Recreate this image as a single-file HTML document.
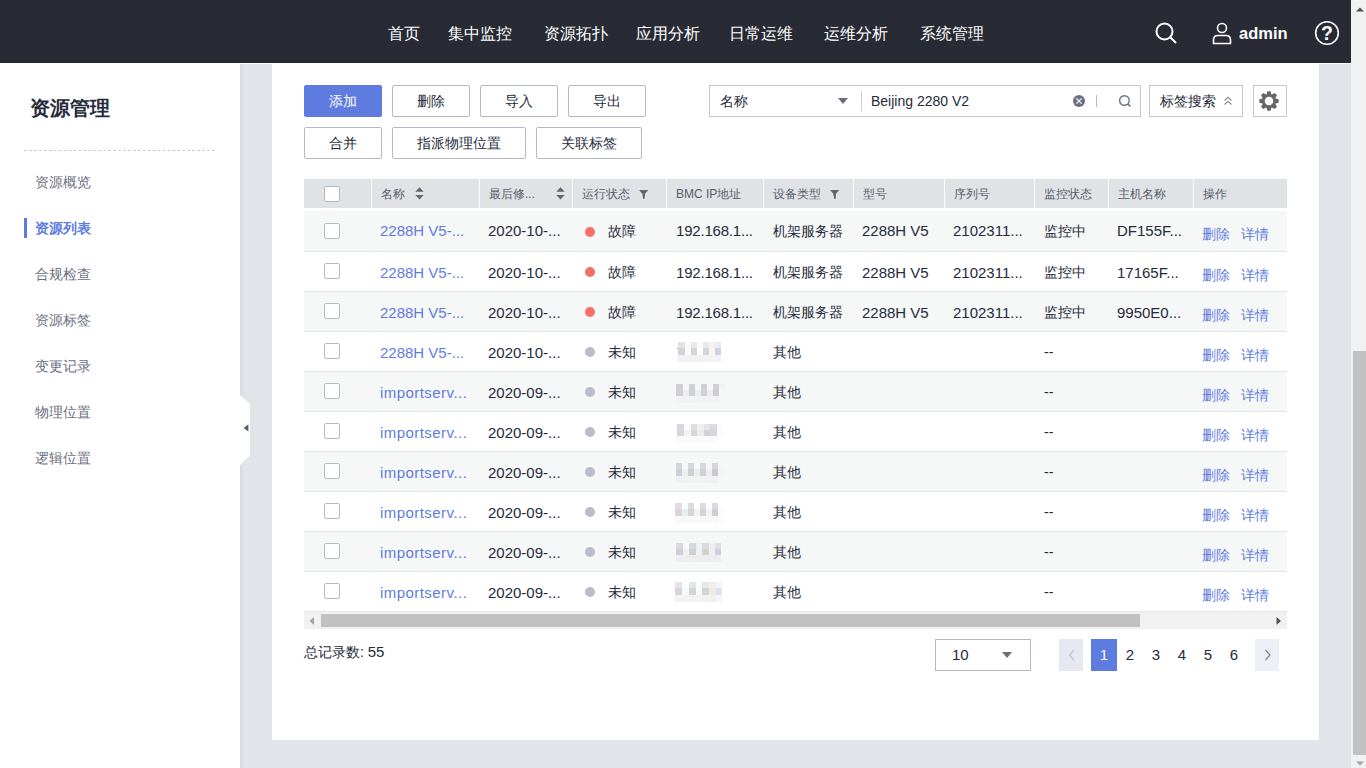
<!DOCTYPE html>
<html><head><meta charset="utf-8">
<style>
*{margin:0;padding:0;box-sizing:border-box}
html,body{width:1366px;height:768px;overflow:hidden;background:#e1e4e9;font-family:"Liberation Sans",sans-serif;color:#252b3a}
.abs{position:absolute}
.t{position:absolute;white-space:nowrap}
#hdr{position:absolute;left:0;top:0;width:1351px;height:63px;background:#282b33}
.nav{position:absolute;top:23px;color:#fff;font-size:16px;line-height:22px;white-space:nowrap;font-weight:500}
#vscroll{position:absolute;left:1351px;top:0;width:15px;height:768px;background:#f1f1f1}
#side{position:absolute;left:0;top:63px;width:240px;height:705px;background:#fff}
#main{position:absolute;left:272px;top:63px;width:1047px;height:677px;background:#fff}
.menu{position:absolute;left:35px;font-size:14px;line-height:20px;color:#6b707f;white-space:nowrap}
.btn{position:absolute;height:32px;border:1px solid #b3b8ca;border-radius:2px;background:#fff;font-size:14px;line-height:30px;text-align:center;color:#252b3a;white-space:nowrap}
.btn.pri{background:#5e7ce0;border-color:#5e7ce0;color:#fff}
.row{position:absolute;left:304px;width:983px;border-bottom:1px solid #e4e5e7}
.cb{position:absolute;width:16px;height:16px;border:1px solid #b3b8ca;border-radius:2px;background:#fff}
.cell{position:absolute;top:0;font-size:14px;white-space:nowrap;color:#252b3a}
.lnk{color:#5e7ce0}
.lat{font-size:15px}
.dot{position:absolute;width:10px;height:10px;border-radius:50%}
.th{position:absolute;top:179px;height:29px;background:#e0e3e6}
.tht{position:absolute;top:0;line-height:29px;font-size:12px;color:#575d6c;white-space:nowrap}
.pg{position:absolute;top:639px;height:32px;line-height:32px;font-size:15px;text-align:center;color:#252b3a}
</style></head><body>
<div id="hdr">
<div class="nav" style="left:388px">首页</div>
<div class="nav" style="left:448px">集中监控</div>
<div class="nav" style="left:544px">资源拓扑</div>
<div class="nav" style="left:636px">应用分析</div>
<div class="nav" style="left:729px">日常运维</div>
<div class="nav" style="left:824px">运维分析</div>
<div class="nav" style="left:920px">系统管理</div>
<svg class="abs" style="left:1154px;top:21px" width="26" height="26" viewBox="0 0 26 26"><circle cx="10.5" cy="10.5" r="8" fill="none" stroke="#fff" stroke-width="2"/><line x1="16.5" y1="16.5" x2="22" y2="22" stroke="#fff" stroke-width="2"/></svg>
<svg class="abs" style="left:1211px;top:21px" width="22" height="24" viewBox="0 0 22 24"><circle cx="11" cy="7" r="4.5" fill="none" stroke="#fff" stroke-width="1.6"/><path d="M2.5 22.5 V19 Q2.5 14.5 7 14.5 H15 Q19.5 14.5 19.5 19 V22.5 Z" fill="none" stroke="#fff" stroke-width="1.6" stroke-linejoin="round"/></svg>
<div class="t" style="left:1239px;top:22px;font-size:16.5px;line-height:22px;font-weight:bold;color:#fff">admin</div>
<svg class="abs" style="left:1313px;top:19px" width="28" height="28" viewBox="0 0 28 28"><circle cx="14" cy="14" r="11.3" fill="none" stroke="#fff" stroke-width="1.6"/><text x="14" y="21" text-anchor="middle" font-family="Liberation Sans" font-weight="bold" font-size="19.5" fill="#fff">?</text></svg>
</div>
<div id="vscroll"><div class="abs" style="left:2px;top:351px;width:13px;height:404px;background:#c1c1c1"></div>
<svg class="abs" style="left:4.5px;top:6.5px" width="8" height="5"><path d="M0 4.5 L4 0.5 L8 4.5 Z" fill="#505050"/></svg>
<svg class="abs" style="left:4.5px;top:760.5px" width="8" height="5"><path d="M0 0.5 L4 4.5 L8 0.5 Z" fill="#a3a3a3"/></svg>
</div>
<div id="side">
<div class="t" style="left:30px;top:33px;font-size:20px;line-height:24px;font-weight:bold;color:#252b3a">资源管理</div>
<div class="abs" style="left:24px;top:87px;width:191px;border-top:1px dashed #c9ccd6"></div>
<div class="menu" style="top:109px">资源概览</div>
<div class="abs" style="left:24px;top:155px;width:3px;height:20px;background:#5e7ce0"></div>
<div class="menu" style="top:155px;color:#5e7ce0;font-weight:bold">资源列表</div>
<div class="menu" style="top:201px">合规检查</div>
<div class="menu" style="top:247px">资源标签</div>
<div class="menu" style="top:293px">变更记录</div>
<div class="menu" style="top:339px">物理位置</div>
<div class="menu" style="top:385px">逻辑位置</div>
</div>
<div id="main"></div>
<div class="abs" style="left:0;top:63px;width:1351px;height:1px;background:#fff"></div>
<div class="abs" style="left:240px;top:64px;width:5px;height:704px;background:linear-gradient(90deg,rgba(0,0,0,0.045),rgba(0,0,0,0))"></div>
<svg class="abs" style="left:240px;top:395px" width="12" height="72" viewBox="0 0 12 72"><path d="M0 0 L10 9 V60.5 L0 70 Z" fill="#fff"/><path d="M3.6 33 L8.4 29.2 V36.6 Z" fill="#575d6c"/></svg>
<div class="btn pri" style="left:304px;top:85px;width:78px">添加</div>
<div class="btn" style="left:392px;top:85px;width:78px">删除</div>
<div class="btn" style="left:480px;top:85px;width:78px">导入</div>
<div class="btn" style="left:568px;top:85px;width:78px">导出</div>
<div class="btn" style="left:304px;top:127px;width:78px">合并</div>
<div class="btn" style="left:392px;top:127px;width:134px">指派物理位置</div>
<div class="btn" style="left:536px;top:127px;width:106px">关联标签</div>
<div class="abs" style="left:709px;top:85px;width:432px;height:32px;border:1px solid #c9c9c9;background:#fff"></div>
<div class="t" style="left:720px;top:85px;line-height:32px;font-size:14px">名称</div>
<svg class="abs" style="left:838px;top:98px" width="10" height="6"><path d="M0 0 H10 L5 6 Z" fill="#6b6f7a"/></svg>
<div class="abs" style="left:861px;top:91px;width:1px;height:20px;background:#c9ccd6"></div>
<div class="t" style="left:871px;top:85px;line-height:32px;font-size:14px;color:#252b3a">Beijing 2280 V2</div>
<svg class="abs" style="left:1073px;top:95px" width="12" height="12" viewBox="0 0 12 12"><circle cx="6" cy="6" r="6" fill="#6b7182"/><path d="M3.4 3.4 L8.6 8.6 M8.6 3.4 L3.4 8.6" stroke="#fff" stroke-width="1.2"/></svg>
<div class="abs" style="left:1096px;top:95px;width:1px;height:12px;background:#b6bacb"></div>
<svg class="abs" style="left:1118px;top:94px" width="14" height="14" viewBox="0 0 14 14"><circle cx="6.4" cy="6.5" r="4.8" fill="none" stroke="#6b7182" stroke-width="1.4"/><line x1="9.8" y1="9.9" x2="12.4" y2="12.5" stroke="#6b7182" stroke-width="1.5"/></svg>
<div class="abs" style="left:1149px;top:85px;width:94px;height:32px;border:1px solid #c9c9c9;background:#fff"></div>
<div class="t" style="left:1160px;top:85px;line-height:32px;font-size:14px">标签搜索</div>
<svg class="abs" style="left:1223px;top:96px" width="10" height="10" viewBox="0 0 10 10"><path d="M1.5 4.5 L5 1.2 L8.5 4.5 M1.5 8.5 L5 5.2 L8.5 8.5" fill="none" stroke="#8f8f8f" stroke-width="1.2"/></svg>
<div class="abs" style="left:1253px;top:85px;width:34px;height:32px;border:1px solid #c9c9c9;background:#fff"></div>
<svg class="abs" style="left:1259.2px;top:91.3px" width="20" height="20" viewBox="0 0 20 20"><path fill-rule="evenodd" fill="#666" d="M7.53,3.45 L8.34,0.34 L11.66,0.34 L12.47,3.45 L12.89,3.62 L15.66,2.00 L18.00,4.34 L16.38,7.11 L16.55,7.53 L19.66,8.34 L19.66,11.66 L16.55,12.47 L16.38,12.89 L18.00,15.66 L15.66,18.00 L12.89,16.38 L12.47,16.55 L11.66,19.66 L8.34,19.66 L7.53,16.55 L7.11,16.38 L4.34,18.00 L2.00,15.66 L3.62,12.89 L3.45,12.47 L0.34,11.66 L0.34,8.34 L3.45,7.53 L3.62,7.11 L2.00,4.34 L4.34,2.00 L7.11,3.62 Z M10 5.7 A4.3 4.3 0 1 0 10 14.3 A4.3 4.3 0 1 0 10 5.7 Z"/></svg>
<div class="th" style="left:304px;width:67px"></div>
<div class="th" style="left:372px;width:107px"></div>
<div class="th" style="left:480px;width:92px"></div>
<div class="th" style="left:573px;width:93px"></div>
<div class="th" style="left:667px;width:96px"></div>
<div class="th" style="left:764px;width:89px"></div>
<div class="th" style="left:854px;width:90px"></div>
<div class="th" style="left:945px;width:89px"></div>
<div class="th" style="left:1035px;width:73px"></div>
<div class="th" style="left:1109px;width:84px"></div>
<div class="th" style="left:1194px;width:93px"></div>
<div class="cb" style="left:324px;top:186px"></div>
<div class="tht" style="left:381px;top:180px">名称</div>
<div class="tht" style="left:489px;top:180px">最后修...</div>
<div class="tht" style="left:582px;top:180px">运行状态</div>
<div class="tht" style="left:676px;top:180px">BMC IP地址</div>
<div class="tht" style="left:773px;top:180px">设备类型</div>
<div class="tht" style="left:863px;top:180px">型号</div>
<div class="tht" style="left:954px;top:180px">序列号</div>
<div class="tht" style="left:1044px;top:180px">监控状态</div>
<div class="tht" style="left:1118px;top:180px">主机名称</div>
<div class="tht" style="left:1203px;top:180px">操作</div>
<svg class="abs" style="left:414.5px;top:187px" width="9" height="13" viewBox="0 0 9 13"><path d="M4.5 0.2 L8.7 4.8 H0.3 Z M0.3 8 H8.7 L4.5 12.5 Z" fill="#666"/></svg>
<svg class="abs" style="left:555.5px;top:187px" width="9" height="13" viewBox="0 0 9 13"><path d="M4.5 0.2 L8.7 4.8 H0.3 Z M0.3 8 H8.7 L4.5 12.5 Z" fill="#666"/></svg>
<svg class="abs" style="left:638.7px;top:190px" width="10" height="10" viewBox="0 0 10 10"><path d="M0 0 H9.3 L6.1 3.8 L5.7 8.4 Q4.9 9.5 4.1 8.4 L3.3 3.8 Z" fill="#666"/></svg>
<svg class="abs" style="left:829.7px;top:190px" width="10" height="10" viewBox="0 0 10 10"><path d="M0 0 H9.3 L6.1 3.8 L5.7 8.4 Q4.9 9.5 4.1 8.4 L3.3 3.8 Z" fill="#666"/></svg>
<div class="row" style="top:211px;height:41px;background:#f6f7f7">
<div class="cb" style="left:20px;top:12px"></div>
<div class="cell lnk lat" style="left:76px;line-height:40px;height:40px;top:0px">2288H V5-...</div>
<div class="cell lat" style="left:184px;line-height:40px;height:40px;top:0px">2020-10-...</div>
<div class="dot" style="left:281px;top:16px;background:#f66f6a"></div>
<div class="cell" style="left:304px;line-height:40px;height:40px;top:0px">故障</div>
<div class="cell lat" style="left:372px;line-height:40px;height:40px;top:0px;letter-spacing:-0.2px">192.168.1...</div>
<div class="cell" style="left:469px;line-height:40px;height:40px;top:0px">机架服务器</div>
<div class="cell lat" style="left:558px;line-height:40px;height:40px;top:0px">2288H V5</div>
<div class="cell lat" style="left:649px;line-height:40px;height:40px;top:0px">2102311...</div>
<div class="cell" style="left:740px;line-height:40px;height:40px;top:0px">监控中</div>
<div class="cell lat" style="left:813px;line-height:40px;height:40px;top:0px">DF155F...</div>
<div class="cell lnk" style="left:898px;line-height:40px;height:40px;top:0px;margin-top:3px">删除</div>
<div class="cell lnk" style="left:937px;line-height:40px;height:40px;top:0px;margin-top:3px">详情</div>
</div>
<div class="row" style="top:252px;height:40px;background:#fff">
<div class="cb" style="left:20px;top:11px"></div>
<div class="cell lnk lat" style="left:76px;line-height:39px;height:39px;top:1px">2288H V5-...</div>
<div class="cell lat" style="left:184px;line-height:39px;height:39px;top:1px">2020-10-...</div>
<div class="dot" style="left:281px;top:15px;background:#f66f6a"></div>
<div class="cell" style="left:304px;line-height:39px;height:39px;top:1px">故障</div>
<div class="cell lat" style="left:372px;line-height:39px;height:39px;top:1px;letter-spacing:-0.2px">192.168.1...</div>
<div class="cell" style="left:469px;line-height:39px;height:39px;top:1px">机架服务器</div>
<div class="cell lat" style="left:558px;line-height:39px;height:39px;top:1px">2288H V5</div>
<div class="cell lat" style="left:649px;line-height:39px;height:39px;top:1px">2102311...</div>
<div class="cell" style="left:740px;line-height:39px;height:39px;top:1px">监控中</div>
<div class="cell lat" style="left:813px;line-height:39px;height:39px;top:1px">17165F...</div>
<div class="cell lnk" style="left:898px;line-height:39px;height:39px;top:1px;margin-top:3px">删除</div>
<div class="cell lnk" style="left:937px;line-height:39px;height:39px;top:1px;margin-top:3px">详情</div>
</div>
<div class="row" style="top:292px;height:40px;background:#f6f7f7">
<div class="cb" style="left:20px;top:11px"></div>
<div class="cell lnk lat" style="left:76px;line-height:39px;height:39px;top:1px">2288H V5-...</div>
<div class="cell lat" style="left:184px;line-height:39px;height:39px;top:1px">2020-10-...</div>
<div class="dot" style="left:281px;top:15px;background:#f66f6a"></div>
<div class="cell" style="left:304px;line-height:39px;height:39px;top:1px">故障</div>
<div class="cell lat" style="left:372px;line-height:39px;height:39px;top:1px;letter-spacing:-0.2px">192.168.1...</div>
<div class="cell" style="left:469px;line-height:39px;height:39px;top:1px">机架服务器</div>
<div class="cell lat" style="left:558px;line-height:39px;height:39px;top:1px">2288H V5</div>
<div class="cell lat" style="left:649px;line-height:39px;height:39px;top:1px">2102311...</div>
<div class="cell" style="left:740px;line-height:39px;height:39px;top:1px">监控中</div>
<div class="cell lat" style="left:813px;line-height:39px;height:39px;top:1px">9950E0...</div>
<div class="cell lnk" style="left:898px;line-height:39px;height:39px;top:1px;margin-top:3px">删除</div>
<div class="cell lnk" style="left:937px;line-height:39px;height:39px;top:1px;margin-top:3px">详情</div>
</div>
<div class="row" style="top:332px;height:40px;background:#fff">
<div class="cb" style="left:20px;top:11px"></div>
<div class="cell lnk lat" style="left:76px;line-height:39px;height:39px;top:1px">2288H V5-...</div>
<div class="cell lat" style="left:184px;line-height:39px;height:39px;top:1px">2020-10-...</div>
<div class="dot" style="left:281px;top:15px;background:#b8bccb"></div>
<div class="cell" style="left:304px;line-height:39px;height:39px;top:1px">未知</div>
<div class="abs" style="left:374px;top:10px;width:7px;height:6px;background:#e2e3e8"></div>
<div class="abs" style="left:381px;top:10px;width:6px;height:6px;background:#fcfbfc"></div>
<div class="abs" style="left:387px;top:10px;width:6px;height:6px;background:#e6e9ea"></div>
<div class="abs" style="left:393px;top:10px;width:6px;height:6px;background:#fbfbf9"></div>
<div class="abs" style="left:399px;top:10px;width:6px;height:6px;background:#e8e9ee"></div>
<div class="abs" style="left:405px;top:10px;width:6px;height:6px;background:#f3f3ef"></div>
<div class="abs" style="left:411px;top:10px;width:6px;height:6px;background:#ebebf5"></div>
<div class="abs" style="left:374px;top:16px;width:7px;height:7px;background:#d3d2da"></div>
<div class="abs" style="left:381px;top:16px;width:6px;height:7px;background:#fcfcfc"></div>
<div class="abs" style="left:387px;top:16px;width:6px;height:7px;background:#d2d6d8"></div>
<div class="abs" style="left:393px;top:16px;width:6px;height:7px;background:#fcfcfa"></div>
<div class="abs" style="left:399px;top:16px;width:6px;height:7px;background:#d6d6d9"></div>
<div class="abs" style="left:405px;top:16px;width:6px;height:7px;background:#fcf4ea"></div>
<div class="abs" style="left:411px;top:16px;width:6px;height:7px;background:#cbd3e5"></div>
<div class="abs" style="left:374px;top:23px;width:7px;height:7px;background:#f2f2f5"></div>
<div class="abs" style="left:381px;top:23px;width:6px;height:7px;background:#f2f2f2"></div>
<div class="abs" style="left:387px;top:23px;width:6px;height:7px;background:#f2f2f2"></div>
<div class="abs" style="left:393px;top:23px;width:6px;height:7px;background:#f2f2f2"></div>
<div class="abs" style="left:399px;top:23px;width:6px;height:7px;background:#f2f2f2"></div>
<div class="abs" style="left:405px;top:23px;width:6px;height:7px;background:#f2f3f3"></div>
<div class="abs" style="left:411px;top:23px;width:6px;height:7px;background:#f2f2f7"></div>
<div class="cell" style="left:469px;line-height:39px;height:39px;top:1px">其他</div>
<div class="cell" style="left:740px;line-height:39px;height:39px;top:1px">--</div>
<div class="cell lnk" style="left:898px;line-height:39px;height:39px;top:1px;margin-top:3px">删除</div>
<div class="cell lnk" style="left:937px;line-height:39px;height:39px;top:1px;margin-top:3px">详情</div>
</div>
<div class="row" style="top:372px;height:40px;background:#f6f7f7">
<div class="cb" style="left:20px;top:11px"></div>
<div class="cell lnk lat" style="left:76px;line-height:39px;height:39px;top:1px;letter-spacing:0.45px">importserv...</div>
<div class="cell lat" style="left:184px;line-height:39px;height:39px;top:1px">2020-09-...</div>
<div class="dot" style="left:281px;top:15px;background:#b8bccb"></div>
<div class="cell" style="left:304px;line-height:39px;height:39px;top:1px">未知</div>
<div class="abs" style="left:372px;top:12px;width:7px;height:6px;background:#d0cfd6"></div>
<div class="abs" style="left:379px;top:12px;width:6px;height:6px;background:#f7f5f6"></div>
<div class="abs" style="left:385px;top:12px;width:6px;height:6px;background:#cdd2d5"></div>
<div class="abs" style="left:391px;top:12px;width:6px;height:6px;background:#f7f5f5"></div>
<div class="abs" style="left:397px;top:12px;width:6px;height:6px;background:#cfd0d4"></div>
<div class="abs" style="left:403px;top:12px;width:6px;height:6px;background:#f9f5f2"></div>
<div class="abs" style="left:409px;top:12px;width:6px;height:6px;background:#ced0d8"></div>
<div class="abs" style="left:415px;top:12px;width:6px;height:6px;background:#f7f3f3"></div>
<div class="abs" style="left:372px;top:18px;width:7px;height:6px;background:#d0cfd6"></div>
<div class="abs" style="left:379px;top:18px;width:6px;height:6px;background:#eceded"></div>
<div class="abs" style="left:385px;top:18px;width:6px;height:6px;background:#cdd2d5"></div>
<div class="abs" style="left:391px;top:18px;width:6px;height:6px;background:#ecedec"></div>
<div class="abs" style="left:397px;top:18px;width:6px;height:6px;background:#d0d1d1"></div>
<div class="abs" style="left:403px;top:18px;width:6px;height:6px;background:#ededec"></div>
<div class="abs" style="left:409px;top:18px;width:6px;height:6px;background:#ccced6"></div>
<div class="abs" style="left:415px;top:18px;width:6px;height:6px;background:#f6f7f7"></div>
<div class="abs" style="left:372px;top:24px;width:7px;height:7px;background:#f4f2f3"></div>
<div class="abs" style="left:379px;top:24px;width:6px;height:7px;background:#f3f3f3"></div>
<div class="abs" style="left:385px;top:24px;width:6px;height:7px;background:#f3f3f3"></div>
<div class="abs" style="left:391px;top:24px;width:6px;height:7px;background:#f3f3f3"></div>
<div class="abs" style="left:397px;top:24px;width:6px;height:7px;background:#f4f4f4"></div>
<div class="abs" style="left:403px;top:24px;width:6px;height:7px;background:#f3f3f3"></div>
<div class="abs" style="left:409px;top:24px;width:6px;height:7px;background:#f3f3f5"></div>
<div class="abs" style="left:415px;top:24px;width:6px;height:7px;background:#f6f6f6"></div>
<div class="cell" style="left:469px;line-height:39px;height:39px;top:1px">其他</div>
<div class="cell" style="left:740px;line-height:39px;height:39px;top:1px">--</div>
<div class="cell lnk" style="left:898px;line-height:39px;height:39px;top:1px;margin-top:3px">删除</div>
<div class="cell lnk" style="left:937px;line-height:39px;height:39px;top:1px;margin-top:3px">详情</div>
</div>
<div class="row" style="top:412px;height:40px;background:#fff">
<div class="cb" style="left:20px;top:11px"></div>
<div class="cell lnk lat" style="left:76px;line-height:39px;height:39px;top:1px;letter-spacing:0.45px">importserv...</div>
<div class="cell lat" style="left:184px;line-height:39px;height:39px;top:1px">2020-09-...</div>
<div class="dot" style="left:281px;top:15px;background:#b8bccb"></div>
<div class="cell" style="left:304px;line-height:39px;height:39px;top:1px">未知</div>
<div class="abs" style="left:373px;top:12px;width:7px;height:6px;background:#d7d8dd"></div>
<div class="abs" style="left:380px;top:12px;width:7px;height:6px;background:#fbf9f9"></div>
<div class="abs" style="left:387px;top:12px;width:6px;height:6px;background:#dae0e3"></div>
<div class="abs" style="left:393px;top:12px;width:7px;height:6px;background:#f3eeee"></div>
<div class="abs" style="left:400px;top:12px;width:6px;height:6px;background:#e2e6eb"></div>
<div class="abs" style="left:406px;top:12px;width:7px;height:6px;background:#dcd8dc"></div>
<div class="abs" style="left:413px;top:12px;width:6px;height:6px;background:#fbfcfb"></div>
<div class="abs" style="left:373px;top:18px;width:7px;height:6px;background:#d8d5dd"></div>
<div class="abs" style="left:380px;top:18px;width:7px;height:6px;background:#f1f3f2"></div>
<div class="abs" style="left:387px;top:18px;width:6px;height:6px;background:#d5d8d8"></div>
<div class="abs" style="left:393px;top:18px;width:7px;height:6px;background:#efebe8"></div>
<div class="abs" style="left:400px;top:18px;width:6px;height:6px;background:#d0d4da"></div>
<div class="abs" style="left:406px;top:18px;width:7px;height:6px;background:#d8d5dc"></div>
<div class="abs" style="left:413px;top:18px;width:6px;height:6px;background:#fbfdfd"></div>
<div class="abs" style="left:373px;top:24px;width:7px;height:7px;background:#fafafa"></div>
<div class="abs" style="left:380px;top:24px;width:7px;height:7px;background:#fafafa"></div>
<div class="abs" style="left:387px;top:24px;width:6px;height:7px;background:#fafafa"></div>
<div class="abs" style="left:393px;top:24px;width:7px;height:7px;background:#fafafa"></div>
<div class="abs" style="left:400px;top:24px;width:6px;height:7px;background:#fafafa"></div>
<div class="abs" style="left:406px;top:24px;width:7px;height:7px;background:#fafafa"></div>
<div class="abs" style="left:413px;top:24px;width:6px;height:7px;background:#ffffff"></div>
<div class="cell" style="left:469px;line-height:39px;height:39px;top:1px">其他</div>
<div class="cell" style="left:740px;line-height:39px;height:39px;top:1px">--</div>
<div class="cell lnk" style="left:898px;line-height:39px;height:39px;top:1px;margin-top:3px">删除</div>
<div class="cell lnk" style="left:937px;line-height:39px;height:39px;top:1px;margin-top:3px">详情</div>
</div>
<div class="row" style="top:452px;height:40px;background:#f6f7f7">
<div class="cb" style="left:20px;top:11px"></div>
<div class="cell lnk lat" style="left:76px;line-height:39px;height:39px;top:1px;letter-spacing:0.45px">importserv...</div>
<div class="cell lat" style="left:184px;line-height:39px;height:39px;top:1px">2020-09-...</div>
<div class="dot" style="left:281px;top:15px;background:#b8bccb"></div>
<div class="cell" style="left:304px;line-height:39px;height:39px;top:1px">未知</div>
<div class="abs" style="left:372px;top:11px;width:6px;height:6px;background:#d5d6db"></div>
<div class="abs" style="left:378px;top:11px;width:6px;height:6px;background:#f6f7f7"></div>
<div class="abs" style="left:384px;top:11px;width:6px;height:6px;background:#d3d8dc"></div>
<div class="abs" style="left:390px;top:11px;width:6px;height:6px;background:#f6f7f7"></div>
<div class="abs" style="left:396px;top:11px;width:6px;height:6px;background:#d8d7db"></div>
<div class="abs" style="left:402px;top:11px;width:6px;height:6px;background:#f6f7f7"></div>
<div class="abs" style="left:408px;top:11px;width:6px;height:6px;background:#d6d5da"></div>
<div class="abs" style="left:414px;top:11px;width:6px;height:6px;background:#f6f7f7"></div>
<div class="abs" style="left:372px;top:17px;width:6px;height:7px;background:#cfced5"></div>
<div class="abs" style="left:378px;top:17px;width:6px;height:7px;background:#eeefef"></div>
<div class="abs" style="left:384px;top:17px;width:6px;height:7px;background:#cbd0d0"></div>
<div class="abs" style="left:390px;top:17px;width:6px;height:7px;background:#eeeded"></div>
<div class="abs" style="left:396px;top:17px;width:6px;height:7px;background:#d0d1d1"></div>
<div class="abs" style="left:402px;top:17px;width:6px;height:7px;background:#eeefee"></div>
<div class="abs" style="left:408px;top:17px;width:6px;height:7px;background:#c9cad2"></div>
<div class="abs" style="left:414px;top:17px;width:6px;height:7px;background:#f5f4f4"></div>
<div class="abs" style="left:372px;top:24px;width:6px;height:7px;background:#f2f1f1"></div>
<div class="abs" style="left:378px;top:24px;width:6px;height:7px;background:#f2f3f3"></div>
<div class="abs" style="left:384px;top:24px;width:6px;height:7px;background:#f2f3f3"></div>
<div class="abs" style="left:390px;top:24px;width:6px;height:7px;background:#f2f3f3"></div>
<div class="abs" style="left:396px;top:24px;width:6px;height:7px;background:#f3f3f3"></div>
<div class="abs" style="left:402px;top:24px;width:6px;height:7px;background:#f2f2f2"></div>
<div class="abs" style="left:408px;top:24px;width:6px;height:7px;background:#f1f1f4"></div>
<div class="abs" style="left:414px;top:24px;width:6px;height:7px;background:#f6f6f6"></div>
<div class="cell" style="left:469px;line-height:39px;height:39px;top:1px">其他</div>
<div class="cell" style="left:740px;line-height:39px;height:39px;top:1px">--</div>
<div class="cell lnk" style="left:898px;line-height:39px;height:39px;top:1px;margin-top:3px">删除</div>
<div class="cell lnk" style="left:937px;line-height:39px;height:39px;top:1px;margin-top:3px">详情</div>
</div>
<div class="row" style="top:492px;height:40px;background:#fff">
<div class="cb" style="left:20px;top:11px"></div>
<div class="cell lnk lat" style="left:76px;line-height:39px;height:39px;top:1px;letter-spacing:0.45px">importserv...</div>
<div class="cell lat" style="left:184px;line-height:39px;height:39px;top:1px">2020-09-...</div>
<div class="dot" style="left:281px;top:15px;background:#b8bccb"></div>
<div class="cell" style="left:304px;line-height:39px;height:39px;top:1px">未知</div>
<div class="abs" style="left:371px;top:11px;width:7px;height:6px;background:#e1dee0"></div>
<div class="abs" style="left:378px;top:11px;width:6px;height:6px;background:#f6fbfd"></div>
<div class="abs" style="left:384px;top:11px;width:6px;height:6px;background:#dbdcdf"></div>
<div class="abs" style="left:390px;top:11px;width:6px;height:6px;background:#ffffff"></div>
<div class="abs" style="left:396px;top:11px;width:6px;height:6px;background:#dcdcdf"></div>
<div class="abs" style="left:402px;top:11px;width:6px;height:6px;background:#ffffff"></div>
<div class="abs" style="left:408px;top:11px;width:6px;height:6px;background:#dbdbe0"></div>
<div class="abs" style="left:414px;top:11px;width:6px;height:6px;background:#ffffff"></div>
<div class="abs" style="left:371px;top:17px;width:7px;height:7px;background:#dcd2d7"></div>
<div class="abs" style="left:378px;top:17px;width:6px;height:7px;background:#e6f0f3"></div>
<div class="abs" style="left:384px;top:17px;width:6px;height:7px;background:#d0d5d5"></div>
<div class="abs" style="left:390px;top:17px;width:6px;height:7px;background:#f2f2f2"></div>
<div class="abs" style="left:396px;top:17px;width:6px;height:7px;background:#d3d5d5"></div>
<div class="abs" style="left:402px;top:17px;width:6px;height:7px;background:#f2f3f3"></div>
<div class="abs" style="left:408px;top:17px;width:6px;height:7px;background:#ccced6"></div>
<div class="abs" style="left:414px;top:17px;width:6px;height:7px;background:#fcfcfd"></div>
<div class="abs" style="left:371px;top:24px;width:7px;height:7px;background:#f8f8f8"></div>
<div class="abs" style="left:378px;top:24px;width:6px;height:7px;background:#f8f8f8"></div>
<div class="abs" style="left:384px;top:24px;width:6px;height:7px;background:#f8f8f8"></div>
<div class="abs" style="left:390px;top:24px;width:6px;height:7px;background:#f8f8f8"></div>
<div class="abs" style="left:396px;top:24px;width:6px;height:7px;background:#f8f8f8"></div>
<div class="abs" style="left:402px;top:24px;width:6px;height:7px;background:#f8f8f8"></div>
<div class="abs" style="left:408px;top:24px;width:6px;height:7px;background:#f8f8f8"></div>
<div class="abs" style="left:414px;top:24px;width:6px;height:7px;background:#fcfcfc"></div>
<div class="cell" style="left:469px;line-height:39px;height:39px;top:1px">其他</div>
<div class="cell" style="left:740px;line-height:39px;height:39px;top:1px">--</div>
<div class="cell lnk" style="left:898px;line-height:39px;height:39px;top:1px;margin-top:3px">删除</div>
<div class="cell lnk" style="left:937px;line-height:39px;height:39px;top:1px;margin-top:3px">详情</div>
</div>
<div class="row" style="top:532px;height:40px;background:#f6f7f7">
<div class="cb" style="left:20px;top:11px"></div>
<div class="cell lnk lat" style="left:76px;line-height:39px;height:39px;top:1px;letter-spacing:0.45px">importserv...</div>
<div class="cell lat" style="left:184px;line-height:39px;height:39px;top:1px">2020-09-...</div>
<div class="dot" style="left:281px;top:15px;background:#b8bccb"></div>
<div class="cell" style="left:304px;line-height:39px;height:39px;top:1px">未知</div>
<div class="abs" style="left:372px;top:11px;width:7px;height:6px;background:#d7d9de"></div>
<div class="abs" style="left:379px;top:11px;width:6px;height:6px;background:#f8f8f8"></div>
<div class="abs" style="left:385px;top:11px;width:7px;height:6px;background:#d4d9dd"></div>
<div class="abs" style="left:392px;top:11px;width:6px;height:6px;background:#f2f1f1"></div>
<div class="abs" style="left:398px;top:11px;width:7px;height:6px;background:#dadbde"></div>
<div class="abs" style="left:405px;top:11px;width:6px;height:6px;background:#efeeea"></div>
<div class="abs" style="left:411px;top:11px;width:6px;height:6px;background:#dde1ea"></div>
<div class="abs" style="left:372px;top:17px;width:7px;height:6px;background:#d1cdd4"></div>
<div class="abs" style="left:379px;top:17px;width:6px;height:6px;background:#eff1f0"></div>
<div class="abs" style="left:385px;top:17px;width:7px;height:6px;background:#cdd1d3"></div>
<div class="abs" style="left:392px;top:17px;width:6px;height:6px;background:#f0f1f1"></div>
<div class="abs" style="left:398px;top:17px;width:7px;height:6px;background:#d0d2d2"></div>
<div class="abs" style="left:405px;top:17px;width:6px;height:6px;background:#f2f0eb"></div>
<div class="abs" style="left:411px;top:17px;width:6px;height:6px;background:#cbd1de"></div>
<div class="abs" style="left:372px;top:23px;width:7px;height:7px;background:#eeedf0"></div>
<div class="abs" style="left:379px;top:23px;width:6px;height:7px;background:#eceded"></div>
<div class="abs" style="left:385px;top:23px;width:7px;height:7px;background:#ededed"></div>
<div class="abs" style="left:392px;top:23px;width:6px;height:7px;background:#ededed"></div>
<div class="abs" style="left:398px;top:23px;width:7px;height:7px;background:#efeded"></div>
<div class="abs" style="left:405px;top:23px;width:6px;height:7px;background:#ededed"></div>
<div class="abs" style="left:411px;top:23px;width:6px;height:7px;background:#ededf0"></div>
<div class="cell" style="left:469px;line-height:39px;height:39px;top:1px">其他</div>
<div class="cell" style="left:740px;line-height:39px;height:39px;top:1px">--</div>
<div class="cell lnk" style="left:898px;line-height:39px;height:39px;top:1px;margin-top:3px">删除</div>
<div class="cell lnk" style="left:937px;line-height:39px;height:39px;top:1px;margin-top:3px">详情</div>
</div>
<div class="row" style="top:572px;height:40px;background:#fff">
<div class="cb" style="left:20px;top:11px"></div>
<div class="cell lnk lat" style="left:76px;line-height:39px;height:39px;top:1px;letter-spacing:0.45px">importserv...</div>
<div class="cell lat" style="left:184px;line-height:39px;height:39px;top:1px">2020-09-...</div>
<div class="dot" style="left:281px;top:15px;background:#b8bccb"></div>
<div class="cell" style="left:304px;line-height:39px;height:39px;top:1px">未知</div>
<div class="abs" style="left:371px;top:10px;width:7px;height:6px;background:#e4e4e7"></div>
<div class="abs" style="left:378px;top:10px;width:7px;height:6px;background:#fdfefe"></div>
<div class="abs" style="left:385px;top:10px;width:7px;height:6px;background:#e3e5e7"></div>
<div class="abs" style="left:392px;top:10px;width:6px;height:6px;background:#fbfbfb"></div>
<div class="abs" style="left:398px;top:10px;width:7px;height:6px;background:#e6e8ea"></div>
<div class="abs" style="left:405px;top:10px;width:7px;height:6px;background:#f1f0ee"></div>
<div class="abs" style="left:412px;top:10px;width:6px;height:6px;background:#f2f4fa"></div>
<div class="abs" style="left:371px;top:16px;width:7px;height:7px;background:#d8d1d8"></div>
<div class="abs" style="left:378px;top:16px;width:7px;height:7px;background:#f5fafc"></div>
<div class="abs" style="left:385px;top:16px;width:7px;height:7px;background:#d1d5d6"></div>
<div class="abs" style="left:392px;top:16px;width:6px;height:7px;background:#fbfbfb"></div>
<div class="abs" style="left:398px;top:16px;width:7px;height:7px;background:#d4d6d6"></div>
<div class="abs" style="left:405px;top:16px;width:7px;height:7px;background:#f0e8e3"></div>
<div class="abs" style="left:412px;top:16px;width:6px;height:7px;background:#dde4f0"></div>
<div class="abs" style="left:371px;top:23px;width:7px;height:7px;background:#f2f2f2"></div>
<div class="abs" style="left:378px;top:23px;width:7px;height:7px;background:#f2f3f3"></div>
<div class="abs" style="left:385px;top:23px;width:7px;height:7px;background:#f2f3f3"></div>
<div class="abs" style="left:392px;top:23px;width:6px;height:7px;background:#f3f3f3"></div>
<div class="abs" style="left:398px;top:23px;width:7px;height:7px;background:#f2f1f0"></div>
<div class="abs" style="left:405px;top:23px;width:7px;height:7px;background:#f1f1f1"></div>
<div class="abs" style="left:412px;top:23px;width:6px;height:7px;background:#f5f6fb"></div>
<div class="cell" style="left:469px;line-height:39px;height:39px;top:1px">其他</div>
<div class="cell" style="left:740px;line-height:39px;height:39px;top:1px">--</div>
<div class="cell lnk" style="left:898px;line-height:39px;height:39px;top:1px;margin-top:3px">删除</div>
<div class="cell lnk" style="left:937px;line-height:39px;height:39px;top:1px;margin-top:3px">详情</div>
</div>
<div class="abs" style="left:677px;top:348px;width:1px;height:1px;background:#eea35a"></div>
<div class="abs" style="left:304px;top:611px;width:983px;height:18px;background:#f1f1f1;border-top:1px solid #e6e6e6"></div>
<div class="abs" style="left:321px;top:614px;width:819px;height:13px;background:#c1c1c1"></div>
<svg class="abs" style="left:309px;top:617px" width="6" height="8"><path d="M5 0 V8 L0.5 4 Z" fill="#a3a3a3"/></svg>
<svg class="abs" style="left:1276px;top:617px" width="6" height="8"><path d="M0.5 0 V8 L5 4 Z" fill="#505050"/></svg>
<div class="t" style="left:304px;top:642px;line-height:20px;font-size:14px">总记录数: <span style="font-size:15px">55</span></div>
<div class="abs" style="left:935px;top:639px;width:96px;height:32px;border:1px solid #b3b8ca;background:#fff"></div>
<div class="t" style="left:952px;top:639px;line-height:32px;font-size:15px">10</div>
<svg class="abs" style="left:1002px;top:652px" width="10" height="6"><path d="M0 0 H10 L5 6 Z" fill="#6b6f7a"/></svg>
<div class="pg" style="left:1059px;width:24px;background:#e6e9f2"></div>
<svg class="abs" style="left:1068px;top:649px" width="8" height="12"><path d="M6 1 L1.5 6 L6 11" fill="none" stroke="#c0c4d0" stroke-width="1.2"/></svg>
<div class="pg" style="left:1091px;width:26px;background:#5e7ce0;color:#fff">1</div>
<div class="pg" style="left:1117px;width:26px">2</div>
<div class="pg" style="left:1143px;width:26px">3</div>
<div class="pg" style="left:1169px;width:26px">4</div>
<div class="pg" style="left:1195px;width:26px">5</div>
<div class="pg" style="left:1221px;width:26px">6</div>
<div class="pg" style="left:1255px;width:24px;background:#eef0f8"></div>
<svg class="abs" style="left:1264px;top:649px" width="8" height="12"><path d="M1.5 1 L6 6 L1.5 11" fill="none" stroke="#7d8190" stroke-width="1.2"/></svg>
</body></html>
